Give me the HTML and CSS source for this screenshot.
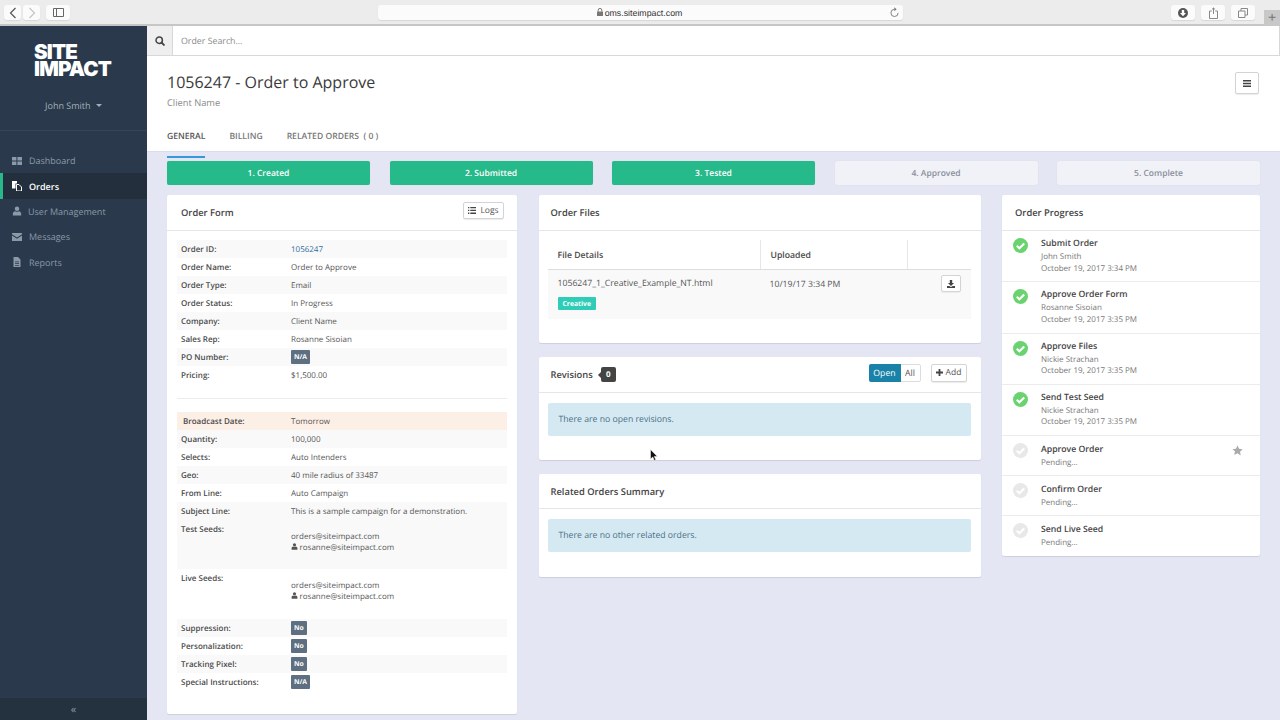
FILE: index.html
```html
<!DOCTYPE html>
<html lang="en">
<head>
<meta charset="utf-8">
<title>Order to Approve</title>
<link rel="stylesheet" href="styles.css">
</head>
<body>
<svg class="defs" width="0" height="0">
  <symbol id="check" viewBox="0 0 16 16"><path d="M4 8.200l2.800 2.800L12 5.800" fill="none" stroke="#fff" stroke-width="2.200"/></symbol>
  <symbol id="user" viewBox="0 0 12 12"><circle cx="6" cy="3.200" r="2.700"/><path d="M1 11.500V9.200C1 7.400 2.400 6.400 3.800 6.200 5.200 7 6.800 7 8.200 6.200 9.600 6.400 11 7.400 11 9.200V11.500z"/></symbol>
</svg>

<header class="chrome">
  <div class="chrome-left">
    <div class="tool tool-nav"><svg width="8" height="12" viewBox="0 0 8 12"><path d="M6.500 1L1.500 6l5 5" fill="none" stroke="#555" stroke-width="1.200"/></svg></div>
    <div class="tool tool-nav"><svg width="8" height="12" viewBox="0 0 8 12"><path d="M1.500 1l5 5-5 5" fill="none" stroke="#c4c4c4" stroke-width="1.200"/></svg></div>
    <div class="tool tool-side"><svg width="11" height="9" viewBox="0 0 11 9"><path d="M.5.500h10v8H.500zM3.500.500v8" fill="none" stroke="#666"/></svg></div>
  </div>
  <div class="address">
    <span class="url"><svg width="6" height="8" viewBox="0 0 6 8"><path d="M1.200 3.500V2.200a1.800 1.800 0 013.600 0v1.300" fill="none" stroke="#777"/><path d="M0 3.500h6V8H0z" fill="#777"/></svg>oms.siteimpact.com</span>
    <svg class="reload" width="9" height="11" viewBox="0 0 9 11"><path d="M4.500 2.300a3.600 3.600 0 103.600 3.600" fill="none" stroke="#777" stroke-width=".9"/><path d="M4.300.300l2.400 2-2.400 2z" fill="#777"/></svg>
  </div>
  <div class="chrome-right">
    <div class="tool tool-wide"><svg width="10" height="10" viewBox="0 0 10 10"><circle cx="5" cy="5" r="5" fill="#555"/><path d="M3.800 2h2.400v3H8L5 8.300 2 5h1.800z" fill="#fff"/></svg></div>
    <div class="tool tool-wide"><svg width="9" height="12" viewBox="0 0 9 12"><path d="M2.800 4H.500v7.500h8V4H6.200" fill="none" stroke="#888"/><path d="M4.500 7V1M3 2.400L4.500 1 6 2.400" fill="none" stroke="#888"/></svg></div>
    <div class="tool tool-wide"><svg width="10" height="10" viewBox="0 0 10 10"><path d="M.500 3h6.500v6.500H.500zM3 3V.500h6.500V7H7" fill="none" stroke="#888"/></svg></div>
  </div>
  <div class="newtab">+</div>
</header>

<div class="app">
  <aside class="sidebar">
    <div class="logo">SITE<br>IMPACT</div>
    <div class="account">John Smith <i class="caret"></i></div>
    <nav class="nav">
      <a class="nav-item"><svg class="nav-icon" viewBox="0 0 10 8"><path d="M0 0h4.400v3.500H0zM5.400 0H10v3.500H5.400zM0 4.500h4.400V8H0zM5.400 4.500H10V8H5.400z"/></svg>Dashboard</a>
      <a class="nav-item active"><svg class="nav-icon" viewBox="0 0 10 10"><path d="M0 0h5v2.500H3.500v5H0z"/><path d="M4.500 3.500H7L9.500 6v4h-5z" fill="none" stroke="currentColor"/></svg>Orders</a>
      <a class="nav-item tight"><svg class="nav-icon"><use href="#user"/></svg>User Management</a>
      <a class="nav-item"><svg class="nav-icon" viewBox="0 0 10 8"><path d="M0 0h10v1.200L5 4.500 0 1.200zM0 2.500l5 3.200 5-3.200V8H0z"/></svg>Messages</a>
      <a class="nav-item"><svg class="nav-icon" viewBox="0 0 10 10"><path d="M1.500 0H6l2.500 2.500V10h-7zM3 4.500v.8h4v-.8zM3 6.200V7h4v-.8zM3 7.900v.8h4v-.8z" fill-rule="evenodd"/></svg>Reports</a>
    </nav>
    <div class="collapse">«</div>
  </aside>

  <main class="main">
    <div class="search">
      <div class="search-icon"><svg width="10" height="10" viewBox="0 0 10 10"><circle cx="4.200" cy="4.200" r="3.200" fill="none" stroke="#444" stroke-width="1.500"/><path d="M6.500 6.500L9.500 9.500" stroke="#444" stroke-width="1.800"/></svg></div>
      <div class="search-input">Order Search...</div>
    </div>

    <section class="page-head">
      <div class="title-row">
        <div>
          <h1>1056247 - Order to Approve</h1>
          <p class="client">Client Name</p>
        </div>
        <button class="btn burger"><svg width="8" height="7" viewBox="0 0 8 7"><path d="M0 0h8v1.400H0zM0 2.800h8v1.400H0zM0 5.600h8V7H0z" fill="#444"/></svg></button>
      </div>
      <div class="tabs">
        <span class="tab current">GENERAL</span>
        <span class="tab">BILLING</span>
        <span class="tab">RELATED ORDERS &nbsp;( 0 )</span>
      </div>
    </section>

    <section class="content">
      <div class="steps">
        <div class="step done">1. Created</div>
        <div class="step done">2. Submitted</div>
        <div class="step done">3. Tested</div>
        <div class="step">4. Approved</div>
        <div class="step">5. Complete</div>
      </div>

      <div class="columns">
        <article class="card form-card">
          <div class="card-head">
            <h2>Order Form</h2>
            <button class="btn logs"><svg width="8" height="7" viewBox="0 0 8 7"><path d="M0 0h1.300v1.300H0zM2.300 0H8v1.300H2.300zM0 2.800h1.300v1.300H0zM2.300 2.800H8v1.300H2.300zM0 5.600h1.300V7H0zM2.300 5.600H8V7H2.300z" fill="#444"/></svg>Logs</button>
          </div>
          <div class="form-body">
            <div class="kv"><b>Order ID:</b><a class="link">1056247</a></div>
            <div class="kv"><b>Order Name:</b><span>Order to Approve</span></div>
            <div class="kv"><b>Order Type:</b><span>Email</span></div>
            <div class="kv"><b>Order Status:</b><span>In Progress</span></div>
            <div class="kv"><b>Company:</b><span>Client Name</span></div>
            <div class="kv"><b>Sales Rep:</b><span>Rosanne Sisoian</span></div>
            <div class="kv"><b>PO Number:</b><span class="tag">N/A</span></div>
            <div class="kv"><b>Pricing:</b><span>$1,500.00</span></div>
            <hr class="rule">
            <div class="kv highlight"><b>Broadcast Date:</b><span>Tomorrow</span></div>
            <div class="kv even"><b>Quantity:</b><span>100,000</span></div>
            <div class="kv"><b>Selects:</b><span>Auto Intenders</span></div>
            <div class="kv even"><b>Geo:</b><span>40 mile radius of 33487</span></div>
            <div class="kv"><b>From Line:</b><span>Auto Campaign</span></div>
            <div class="kv even"><b>Subject Line:</b><span>This is a sample campaign for a demonstration.</span></div>
            <div class="kv seeds"><b>Test Seeds:</b><div class="seed-list"><div>orders@siteimpact.com</div><div><svg class="mini"><use href="#user"/></svg>rosanne@siteimpact.com</div></div></div>
            <div class="kv seeds plain"><b>Live Seeds:</b><div class="seed-list"><div>orders@siteimpact.com</div><div><svg class="mini"><use href="#user"/></svg>rosanne@siteimpact.com</div></div></div>
            <div class="kv"><b>Suppression:</b><span class="tag">No</span></div>
            <div class="kv even"><b>Personalization:</b><span class="tag">No</span></div>
            <div class="kv"><b>Tracking Pixel:</b><span class="tag">No</span></div>
            <div class="kv even"><b>Special Instructions:</b><span class="tag">N/A</span></div>
          </div>
        </article>

        <div class="middle">
          <article class="card files-card">
            <div class="card-head"><h2>Order Files</h2></div>
            <div class="files-body">
              <div class="file-head"><span class="fc-a">File Details</span><span class="fc-b">Uploaded</span><span class="fc-c"></span></div>
              <div class="file-row">
                <div class="fc-a"><div class="file-name">1056247_1_Creative_Example_NT.html</div><span class="tag creative">Creative</span></div>
                <div class="fc-b file-date">10/19/17 3:34 PM</div>
                <div class="fc-c"><button class="btn download"><svg width="8" height="8" viewBox="0 0 8 8"><path d="M2.800 0h2.400v3H7L4 6 1 3h1.800zM0 6h2.200L4 7l1.800-1H8v2H0z" fill="#444"/></svg></button></div>
              </div>
            </div>
          </article>

          <article class="card rev-card">
            <div class="card-head">
              <h2>Revisions</h2><span class="count">0</span>
              <div class="rev-tools">
                <div class="toggle"><span class="on">Open</span><span>All</span></div>
                <button class="btn add"><svg width="7" height="7" viewBox="0 0 7 7"><path d="M2.600 0h1.800v2.600H7v1.800H4.400V7H2.600V4.400H0V2.600h2.600z" fill="#444"/></svg>Add</button>
              </div>
            </div>
            <div class="alert">There are no open revisions.</div>
          </article>

          <article class="card rel-card">
            <div class="card-head"><h2>Related Orders Summary</h2></div>
            <div class="alert">There are no other related orders.</div>
          </article>
        </div>

        <article class="card progress-card">
          <div class="card-head"><h2>Order Progress</h2></div>
          <ul class="progress">
            <li class="prog"><svg class="dot ok"><use href="#check"/></svg><div><h3>Submit Order</h3><p>John Smith</p><p>October 19, 2017 3:34 PM</p></div></li>
            <li class="prog"><svg class="dot ok"><use href="#check"/></svg><div><h3>Approve Order Form</h3><p>Rosanne Sisoian</p><p>October 19, 2017 3:35 PM</p></div></li>
            <li class="prog"><svg class="dot ok"><use href="#check"/></svg><div><h3>Approve Files</h3><p>Nickie Strachan</p><p>October 19, 2017 3:35 PM</p></div></li>
            <li class="prog"><svg class="dot ok"><use href="#check"/></svg><div><h3>Send Test Seed</h3><p>Nickie Strachan</p><p>October 19, 2017 3:35 PM</p></div></li>
            <li class="prog short"><svg class="dot"><use href="#check"/></svg><div><h3>Approve Order</h3><p>Pending...</p></div><svg class="star" width="11" height="11" viewBox="0 0 24 24"><path d="M12 1l3.400 7.300 7.900 1-5.800 5.500 1.500 7.900L12 17.800l-7 3.900 1.500-7.900L.7 9.300l7.900-1z" fill="#aaa"/></svg></li>
            <li class="prog short"><svg class="dot"><use href="#check"/></svg><div><h3>Confirm Order</h3><p>Pending...</p></div></li>
            <li class="prog short"><svg class="dot"><use href="#check"/></svg><div><h3>Send Live Seed</h3><p>Pending...</p></div></li>
          </ul>
        </article>
      </div>
    </section>
  </main>
</div>
<svg class="cursor" width="8" height="13" viewBox="0 0 8 13"><path d="M.500.500v9.500l2.300-2 1.500 3.500 1.500-.7L4.300 7.500h3z" fill="#111" stroke="#fff" stroke-width=".5"/></svg>
</body>
</html>
```
FILE: styles.css
```css
* { box-sizing: border-box; }
html, body { margin: 0; height: 720px; overflow: hidden; }
body { font-family: "Open Sans", "Liberation Sans", sans-serif; font-size: 8.700px; color: #555; background: #e4e7f3; position: relative; text-rendering: geometricPrecision; }
.defs { position: absolute; }
h1, h2, h3, p, ul { margin: 0; padding: 0; }
ul { list-style: none; }
button { font-family: inherit; text-rendering: geometricPrecision; }

.chrome { height: 26px; background: #ececec; border-bottom: 2px solid #c6c6c6; display: flex; align-items: flex-start; padding: 5px 0 0 4px; position: relative; }
.chrome-left { display: flex; gap: 2px; width: 374px; }
.tool { height: 15px; background: #fbfbfb; border-radius: 3px; box-shadow: 0 1px 1px #d8d8d8; display: flex; align-items: center; justify-content: center; }
.tool-nav { width: 17px; }
.tool-side { width: 24px; margin-left: 4px; }
.tool-wide { width: 24px; }
.address { width: 525px; height: 15px; background: #fbfbfb; border-radius: 3px; box-shadow: 0 1px 1px #d8d8d8; display: flex; align-items: center; justify-content: center; position: relative; font-family: "Liberation Sans", sans-serif; font-size: 8.800px; color: #333; }
.url { margin-left: -2px; }
.url svg { margin-right: 2px; }
.reload { position: absolute; right: 4px; top: 2px; }
.chrome-right { display: flex; gap: 6px; margin-left: 268px; }
.newtab { position: absolute; right: 0; top: 10px; width: 16px; height: 16px; background: #c8c8c8; color: #777; font-size: 14px; line-height: 15px; text-align: center; font-family: "Liberation Sans", sans-serif; }

.app { display: flex; height: 694px; }
.sidebar { width: 147px; flex: none; background: #2a3a4c; position: relative; }
.logo { padding: 18px 0 0 34px; font-family: Inter, "Liberation Sans", sans-serif; font-weight: 900; font-size: 20.500px; line-height: 16.500px; letter-spacing: -.8px; color: #fff; }
.account { margin-top: 22px; height: 32px; text-align: center; color: #a4afba; font-size: 9px; line-height: 14px; border-bottom: 1px solid #334557; }
.caret { display: inline-block; border: 3px solid transparent; border-top-color: #a4afba; border-bottom: 0; margin-left: 3px; vertical-align: 2px; }
.nav { padding-top: 17px; }
.nav-item { display: flex; align-items: center; height: 25.400px; padding-left: 12px; color: #8b99a8; font-size: 9px; }
.nav-icon { width: 10px; height: 10px; fill: currentColor; margin-right: 7px; flex: none; }
.nav-item.tight .nav-icon { margin-right: 6px; }
.nav-item.active { color: #fff; background: #232f3c; border-left: 3px solid #27b98a; padding-left: 9px; font-weight: 600; }
.collapse { position: absolute; left: 0; right: 0; bottom: 0; height: 22px; background: #243240; color: #8b99a8; text-align: center; font-size: 11px; line-height: 23px; }

.main { flex: 1; min-width: 0; display: flex; flex-direction: column; }
.search { display: flex; height: 30px; background: #fff; border-bottom: 1px solid #d8d8d8; border-right: 1px solid #d8d8d8; }
.search-icon { width: 26px; display: flex; align-items: center; justify-content: center; background: #efefef; border-right: 1px solid #d8d8d8; }
.search-input { padding: 1px 0 0 8px; line-height: 29px; color: #8a8a8a; font-size: 8.800px; }

.page-head { height: 96px; background: #fff; padding: 15px 21px 0 20px; border-bottom: 1px solid #d9dcea; }
.title-row { display: flex; justify-content: space-between; align-items: flex-start; height: 50px; }
h1 { font-size: 16px; line-height: 22px; font-weight: 400; color: #3a3a3a; }
.client { font-size: 9.300px; line-height: 14px; margin-top: 3px; color: #888; }
.btn { background: #fff; border: 1px solid #d4d4d4; border-radius: 2px; padding: 0; display: flex; align-items: center; justify-content: center; color: #555; box-shadow: 0 1px 1px #ececec; font-size: 8.500px; }
.burger { width: 24px; height: 22px; margin-top: 1px; }
.tabs { display: flex; gap: 24px; margin-top: 7px; }
.tab { font-size: 8.600px; font-weight: 600; line-height: 17px; height: 30px; color: #777; }
.tab.current { color: #555; border-bottom: 2px solid #3498db; }

.content { flex: 1; padding: 9px 20px 0; min-height: 0; }
.steps { display: grid; grid-template-columns: repeat(5, 1fr); gap: 19.500px; }
.step { height: 24px; border-radius: 2px; background: #f1f2f8; color: #8a8f99; box-shadow: 0 0 1px #c8cbd8; text-align: center; line-height: 25px; font-weight: 600; font-size: 8.500px; }
.step.done { background: #26b98a; color: #fff; }
.columns { display: flex; gap: 21.500px; margin-top: 10px; align-items: flex-start; }
.card { background: #fff; border-radius: 2px; box-shadow: 0 1px 1px #ccd0dc; }
.card-head { height: 36px; border-bottom: 1px solid #e6e6e6; display: flex; align-items: center; padding: 0 13px 0 13px; position: relative; }
h2 { font-size: 9.350px; font-weight: 600; color: #444; }

.form-card { width: 350px; height: 519px; }
.form-card .card-head { justify-content: space-between; padding-left: 14px; }
.logs { width: 41px; height: 17px; gap: 4px; margin-top: -4px; }
.form-body { padding: 9px 10px 0; }
.kv { display: flex; align-items: center; height: 18px; padding: 0 0 0 4px; font-size: 8px; }
.kv:nth-child(odd) { background: #f9f9f9; }
.kv b { width: 110px; flex: none; font-weight: 600; color: #4a4a4a; }
.link { color: #2f6c9f; }
.rule { border: 0; border-top: 1px solid #ececec; margin: 14px 0 13px; }
.kv:nth-child(n+9) { background: #fff; }
.kv.even { background: #f9f9f9; }
.kv.highlight { background: #fcefe6; padding-left: 6px; }
.kv.highlight b { width: 108px; }
.kv.seeds { align-items: flex-start; height: 49px; background: #f9f9f9; padding-top: 4px; }
.kv.seeds.plain { height: 50px; background: #fff; }
.kv.seeds b { line-height: 12px; }
.seed-list { padding-top: 6.500px; line-height: 11.500px; }
.mini { width: 7px; height: 7px; margin-right: 1.500px; fill: #555; }
.tag { display: inline-block; background: #5d6f80; color: #fff; border-radius: 1px; font-size: 6.800px; font-weight: 700; line-height: 14px; padding: 0 3px; }
.kv:nth-last-child(4), .kv:nth-last-child(2) { background: #f9f9f9; }
.kv:nth-last-child(3), .kv:nth-last-child(1) { background: #fff; }

.middle { width: 442px; display: flex; flex-direction: column; gap: 14px; }
.middle .card-head { padding-left: 12px; }
.files-card { height: 148px; }
.files-body { padding: 9px 10px 0 9px; }
.file-head { display: flex; height: 30px; border-bottom: 1px solid #ddd; font-weight: 600; color: #4a4a4a; }
.file-head span { line-height: 31px; }
.fc-a { width: 212px; padding-left: 10px; }
.fc-b { width: 147px; padding-left: 10px; }
.fc-c { flex: 1; }
.file-head .fc-b { border-left: 1px solid #e6e6e6; }
.file-head .fc-c { border-left: 1px solid #e6e6e6; }
.file-row { display: flex; height: 49px; background: #f9f9f9; }
.file-name { line-height: 12px; margin-top: 7px; }
.creative { background: #2fcdb8; margin-top: 8px; line-height: 13px; padding: 0 5px; display: inline-block; }
.file-date { padding-top: 8px; }
.file-row .fc-c { padding: 5px 10px 0 0; display: flex; justify-content: flex-end; align-items: flex-start; }
.download { width: 20px; height: 17px; }
.rev-card { height: 103px; }
.rev-card .card-head { padding-right: 14px; }
.count { position: relative; margin-left: 8px; width: 15px; height: 15px; background: #444; color: #fff; border-radius: 2px; text-align: center; line-height: 15px; font-size: 8px; font-weight: 700; }
.count::before { content: ""; position: absolute; left: -3px; top: 5px; border: 3px solid transparent; border-right-color: #444; border-left: 0; }
.rev-tools { margin-left: auto; display: flex; gap: 10px; margin-top: -4px; }
.toggle { display: flex; height: 18px; border: 1px solid #ddd; border-radius: 2px; line-height: 16px; background: #fff; }
.toggle span { width: 19px; text-align: center; }
.toggle .on { width: 32px; margin: -1px 0 -1px -1px; line-height: 18px; background: #1a82a8; color: #fff; border-radius: 2px 0 0 2px; }
.add { width: 36px; height: 18px; gap: 3px; }
.alert { margin: 10px 10px 0 9px; height: 33px; line-height: 33px; padding-left: 11px; background: #d5e9f3; border-radius: 2px; color: #4b6f85; font-size: 8.700px; }
.rel-card { height: 103px; }
.rel-card .card-head { height: 35px; }

.progress-card { width: 258px; }
.prog { display: flex; height: 51.300px; padding: 6px 0 0 11px; border-bottom: 1px solid #ececec; position: relative; }
.prog.short { height: 40px; padding-top: 7px; }
.prog:last-child { border-bottom: 0; }
.dot { width: 15px; height: 15px; border-radius: 50%; background: #e8e8e8; margin-right: 13px; margin-top: 1px; flex: none; }
.prog.short .dot { margin-top: 0; }
.dot.ok { background: #6ad36f; }
h3 { font-size: 8.700px; font-weight: 600; color: #444; line-height: 13px; }
.prog p { font-size: 8px; line-height: 12.500px; color: #777; }
.prog h3 + p { margin-top: 1px; }
.prog:not(.short) h3 + p + p { margin-top: -1px; }
.star { position: absolute; right: 17px; top: 9px; }
.cursor { position: absolute; left: 650px; top: 449px; }
```
